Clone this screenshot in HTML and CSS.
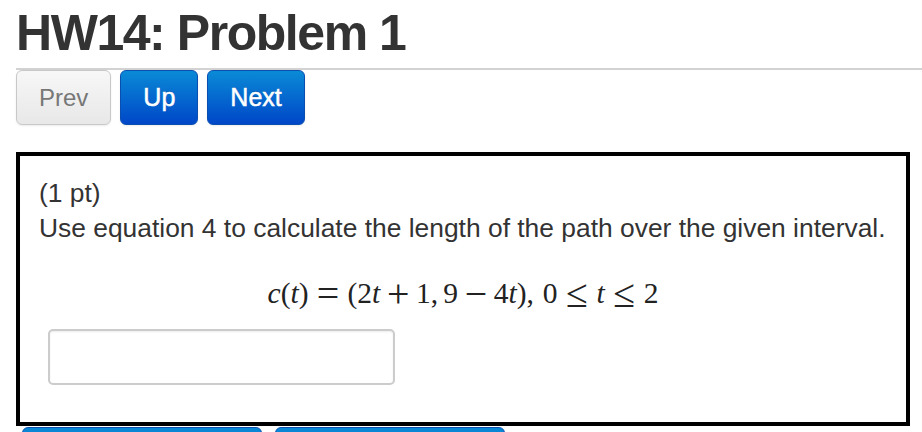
FILE: index.html
```html
<!DOCTYPE html>
<html lang="en">
<head>
    <meta charset="UTF-8">
    <meta name="viewport" content="width=device-width, initial-scale=1.0">
    <title>HW14: Problem 1</title>
    <link rel="stylesheet" href="styles.css">
</head>
<body>
    <div class="page">
        <h1 class="title">HW14: Problem 1</h1>
        <hr class="rule">
        <div class="nav">
            <button class="btn">Prev</button>
            <button class="btn btn-primary">Up</button>
            <button class="btn btn-primary">Next</button>
        </div>

        <div class="problem">
            <div class="points">(1 pt)</div>
            <div class="question">Use equation 4 to calculate the length of the path over the given interval.</div>
            <div class="math">
                <i>c</i>(<i>t</i>)<span class="rel">=</span>(2<i>t</i><span class="bin">+</span>1,<span class="thin"></span>9<span class="bin">&minus;</span>4<i>t</i>),<span class="sep"></span>0<span class="rel">&le;</span><i>t</i><span class="rel">&le;</span>2
            </div>
            <input type="text" class="answer">
        </div>

        <!-- preview / submit buttons sit just under the problem box -->
        <div class="submit-row">
            <button class="btn btn-primary btn-wide" aria-label="Preview My Answers"></button>
            <button class="btn btn-primary btn-wide" aria-label="Submit Answers"></button>
        </div>
    </div>
</body>
</html>
```

FILE: styles.css
```css
body {
    margin: 0;
    font-family: "Liberation Sans", Arial, sans-serif;
    color: #333;
    background: #fff;
    overflow: hidden;
}
.page {
    padding-left: 16px;
}
.title {
    margin: 0;
    padding-top: 8px;
    font-size: 50px;
    line-height: 50px;
    letter-spacing: -1.45px;
    font-weight: bold;
    color: #333;
}
.rule {
    margin: 10px 0 0 0;
    border: none;
    border-top: 2px solid #d2d2d2;
    height: 0;
}
.nav {
    display: flex;
    gap: 9px;
}
.btn {
    font-family: "Liberation Sans", Arial, sans-serif;
    font-size: 24px;
    line-height: 53px;
    height: 55px;
    padding: 0 22px;
    border: 1px solid #c8c8c8;
    border-radius: 6px;
    background: linear-gradient(#f7f7f7, #e8e8e8);
    color: #777;
    box-shadow: 0 1px 2px rgba(0, 0, 0, 0.08);
}
.btn-primary {
    color: #fff;
    font-size: 25px;
    padding: 0 22px;
    border-color: #0a4fb0;
    background: linear-gradient(#0a8ad6, #0047c8);
    text-shadow: 0 -1px 0 rgba(0, 0, 0, 0.2);
    -webkit-text-stroke: 0.5px #fff;
}
.problem {
    margin-top: 27px;
    margin-right: 12px;
    border: 4px solid #000;
    padding: 20px 19px 37px 19px;
}
.points,
.question {
    font-size: 26.4px;
    line-height: 35px;
}
.math {
    margin-top: 27px;
    text-align: center;
    font-family: "Liberation Serif", "Times New Roman", serif;
    font-size: 29.5px;
    line-height: 40px;
    height: 40px;
    color: #222;
}
.math .rel,
.math .bin {
    display: inline-block;
    font-size: 1.35em;
    line-height: 1;
    width: 0.58em;
    text-align: center;
    vertical-align: -0.1em;
}
.math .rel {
    margin: 0 0.2em;
}
.math .bin {
    margin: 0 0.16em;
}
.math .thin {
    margin-left: 0.17em;
}
.math .sep {
    margin-left: 0.3em;
}
.answer {
    display: block;
    margin: 16px 0 0 9px;
    width: 347px;
    height: 56px;
    box-sizing: border-box;
    border: 2px solid #ccc;
    border-radius: 5px;
    box-shadow: inset 0 1px 2px rgba(0, 0, 0, 0.08);
    font-size: 20px;
}
.submit-row {
    display: flex;
    gap: 13px;
    margin-top: 1px;
    padding-left: 6px;
}
.btn-wide {
    width: 240px;
    padding: 0;
}
.btn-wide + .btn-wide {
    width: 230px;
}
```
